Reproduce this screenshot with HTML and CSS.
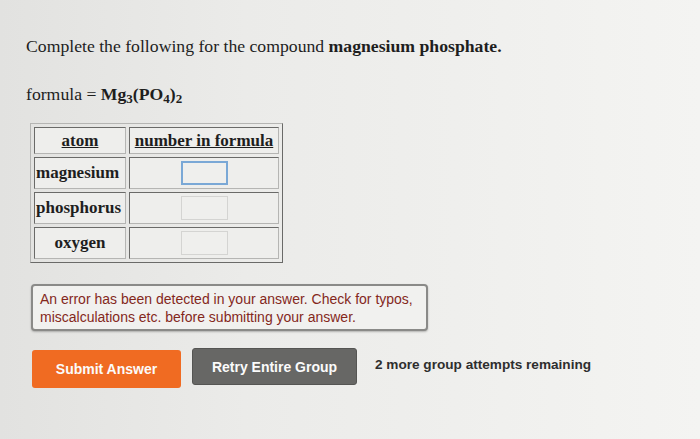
FILE: index.html
```html
<!DOCTYPE html>
<html>
<head>
<meta charset="utf-8">
<link rel="stylesheet" href="styles.css">
</head>
<body>
<div class="page">
  <p class="q">Complete the following for the compound <b>magnesium phosphate.</b></p>
  <p class="formula">formula = <b>Mg<sub>3</sub>(PO<sub>4</sub>)<sub>2</sub></b></p>
  <table class="atoms">
    <tr><th class="c1">atom</th><th class="c2">number in formula</th></tr>
    <tr><td class="c1">magnesium</td><td class="c2"><span class="inp focus"></span></td></tr>
    <tr><td class="c1">phosphorus</td><td class="c2"><span class="inp"></span></td></tr>
    <tr><td class="c1 center">oxygen</td><td class="c2"><span class="inp"></span></td></tr>
  </table>
  <div class="error">An error has been detected in your answer. Check for typos,<br>miscalculations etc. before submitting your answer.</div>
  <div class="actions">
    <button class="btn submit">Submit Answer</button>
    <button class="btn retry">Retry Entire Group</button>
    <span class="remain">2 more group attempts remaining</span>
  </div>
</div>
</body>
</html>
```
FILE: styles.css
```css
html, body {
  margin: 0;
  padding: 0;
  height: 100%;
}
body {
  background: linear-gradient(90deg, #e2e2e0 0%, #ebebe9 35%, #efefed 65%, #f4f4f2 100%);
  font-family: "Liberation Serif", "Times New Roman", serif;
  color: #1e1e1e;
  overflow: hidden;
}
.page {
  padding: 36px 0 0 26px;
}
.q {
  margin: 0;
  font-size: 17.7px;
  line-height: 20px;
}
.formula {
  margin: 28px 0 0 0;
  font-size: 17.7px;
  line-height: 20px;
}
sub {
  font-size: 13px;
  vertical-align: -3px;
  line-height: 0;
}
.atoms {
  margin: 19px 0 0 4px;
  border-collapse: separate;
  border-spacing: 3px;
  border: 1px solid;
  border-color: #b5b5b3 #6a6a68 #6a6a68 #b5b5b3;
  font-size: 17px;
}
.atoms th, .atoms td {
  border: 1px solid;
  border-color: #6a6a68 #b5b5b3 #b5b5b3 #6a6a68;
  padding: 0 1px;
  font-weight: bold;
  height: 30px;
  background: #eeeeec;
}
.atoms th {
  text-decoration: underline;
  height: 25px;
}
.atoms th.c1 { width: 88px; }
.atoms td.c1 { text-align: left; }
.atoms td.center { text-align: center; }
.atoms td.c2 {
  text-align: center;
  width: 146px;
}
.inp {
  display: inline-block;
  width: 45px;
  height: 22px;
  border: 1px solid #d4d4d2;
  background: #efefed;
  vertical-align: middle;
}
.inp.focus {
  border: 2px solid #7aa8d6;
  width: 43px;
  height: 20px;
}
.error {
  margin: 21px 0 0 5px;
  width: 379px;
  padding: 4px 7px 3px 7px;
  border: 2px solid #8a8a88;
  border-radius: 4px;
  background: #f1f1ef;
  color: #84281c;
  font-family: "Liberation Sans", Arial, sans-serif;
  font-size: 14px;
  line-height: 18px;
  box-shadow: 0 1px 2px rgba(0,0,0,0.25);
}
.actions {
  margin: 17px 0 0 6px;
  display: flex;
  align-items: flex-start;
}
.btn {
  font-family: "Liberation Sans", Arial, sans-serif;
  font-weight: bold;
  font-size: 14px;
  color: #fbfbfb;
  border: none;
  border-radius: 3px;
  padding: 0;
}
.submit {
  width: 149px;
  height: 38px;
  background: #f06b22;
  margin-top: 2px;
}
.retry {
  width: 165px;
  height: 37px;
  margin-left: 11px;
  background: #676765;
  border: 1px solid #555553;
}
.remain {
  margin-left: 18px;
  margin-top: 9px;
  font-family: "Liberation Sans", Arial, sans-serif;
  font-weight: bold;
  font-size: 13.6px;
  color: #2e2e2e;
}
```
